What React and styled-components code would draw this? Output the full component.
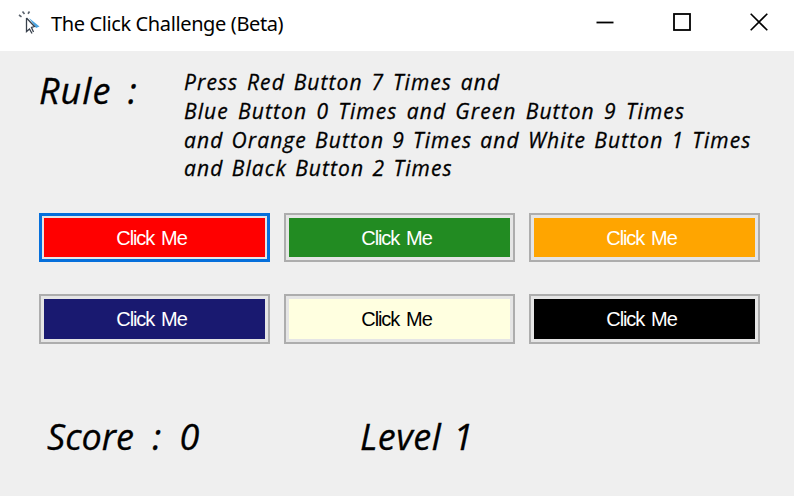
import { useState } from "react";
import styled, { createGlobalStyle } from "styled-components";

const GlobalStyle = createGlobalStyle`
  * {
    box-sizing: border-box;
  }

  body {
    margin: 0;
    background: #efefef;
  }
`;

const Window = styled.div`
  width: 794px;
  height: 496px;
  overflow: hidden;
  display: flex;
  flex-direction: column;
  background: #efefef;
  color: #000;
`;

const TitleBar = styled.header`
  flex: none;
  height: 51px;
  padding: 0 0 4px 17px;
  display: flex;
  align-items: center;
  background: #fff;
`;

const Title = styled.h1`
  flex: 1;
  margin: 0 0 0 10px;
  font: 400 20px/28px "Noto Sans", "Open Sans", sans-serif;
  letter-spacing: -0.38px;
  white-space: nowrap;
`;

const Controls = styled.div`
  display: flex;
  height: 100%;
  margin-right: -3px;
  padding-bottom: 3px;
`;

const ControlButton = styled.button`
  width: 77px;
  padding: 0;
  border: 0;
  background: transparent;
  display: flex;
  align-items: center;
  justify-content: center;
`;

const Content = styled.main`
  flex: 1;
  display: flex;
  flex-direction: column;
  padding: 17px 34px 0 39px;
`;

const Rule = styled.section`
  display: flex;
  height: 145px;
`;

const Script = styled.span`
  font-family: "Open Sans", "Noto Sans", sans-serif;
  font-style: italic;
  white-space: pre;
  font-size: ${({ $size }) => $size}px;
  line-height: ${({ $line }) => $line}px;
  letter-spacing: ${({ $tracking }) => $tracking || 0}px;
  word-spacing: ${({ $gap }) => $gap || 0}px;
  -webkit-text-stroke: 0.3px #000;
`;

const RuleLabel = styled.div`
  width: 145px;
`;

const RuleLines = styled.div`
  display: flex;
  flex-direction: column;
`;

const ButtonGrid = styled.div`
  display: grid;
  grid-template-columns: repeat(3, 231px);
  grid-template-rows: 49px 50px;
  column-gap: 14px;
  row-gap: 32px;
`;

const ClickButton = styled.button`
  padding: 0 6px 0 0;
  border: ${({ $focused }) => ($focused ? "3px solid #056fdb" : "2px solid #adadad")};
  background: ${({ $fill }) => $fill};
  box-shadow: inset 0 0 0 ${({ $focused }) => ($focused ? 2 : 3)}px #e5e5e5;
  color: ${({ $color }) => $color || "#fff"};
  font: 400 20px/24px "Liberation Sans", Arial, sans-serif;
  letter-spacing: -1.1px;
  word-spacing: 2.5px;
  outline: none;
`;

const Status = styled.footer`
  display: flex;
  margin-top: 68px;
  padding-left: 8px;
`;

const ScoreCell = styled.div`
  width: 313px;
`;

const ruleLines = [
  { text: "Press Red Button 7 Times and", tracking: 1.1, gap: 2.2 },
  { text: "Blue Button 0 Times and Green Button 9 Times", tracking: 1.1, gap: 2.7 },
  { text: "and Orange Button 9 Times and White Button 1 Times", tracking: 1.1, gap: 1.6 },
  { text: "and Black Button 2 Times", tracking: 1.1, gap: 1.8 },
];

const buttons = [
  { id: "red", fill: "#ff0000" },
  { id: "green", fill: "#228b22" },
  { id: "orange", fill: "#ffa500" },
  { id: "blue", fill: "#191970" },
  { id: "white", fill: "#ffffe0", color: "#000" },
  { id: "black", fill: "#000000" },
];

const CursorIcon = () => (
  <svg width="24" height="30" viewBox="0 0 24 30">
    <path d="M12 9L22.5 17.5L19 19Z" fill="#4aa3df" />
    <path d="M9.5 9V22.5L12.5 20L15 24.5M9.5 9L17.5 17.5L14.5 18.5L16.5 23" fill="#fff" stroke="#38404c" strokeWidth="1.3" />
    <path d="M2 6L4.5 7.8M5.5 2.5L7.5 5M12.5 2.5L11 4.8" stroke="#59616b" strokeWidth="1.6" fill="none" />
  </svg>
);

const App = () => {
  const [focused, setFocused] = useState("red");
  const [score] = useState(0);

  return (
    <>
      <GlobalStyle />
      <Window>
        <TitleBar>
          <CursorIcon />
          <Title>The Click Challenge (Beta)</Title>
          <Controls>
            <ControlButton aria-label="Minimize">
              <svg width="18" height="18" viewBox="0 0 18 18">
                <path d="M0.5 9.5H17.5" stroke="#000" strokeWidth="1.8" />
              </svg>
            </ControlButton>
            <ControlButton aria-label="Maximize">
              <svg width="18" height="18" viewBox="0 0 18 18">
                <rect x="1" y="1" width="16" height="16" fill="none" stroke="#000" strokeWidth="1.8" />
              </svg>
            </ControlButton>
            <ControlButton aria-label="Close">
              <svg width="18" height="18" viewBox="0 0 18 18">
                <path d="M0.7 0.7L17.3 17.3M17.3 0.7L0.7 17.3" stroke="#000" strokeWidth="1.6" />
              </svg>
            </ControlButton>
          </Controls>
        </TitleBar>
        <Content>
          <Rule>
            <RuleLabel>
              <Script $size={36} $line={46} $tracking={1} $gap={6}>Rule :</Script>
            </RuleLabel>
            <RuleLines>
              {ruleLines.map((line) => (
                <Script key={line.text} $size={21} $line={28.8} $tracking={line.tracking} $gap={line.gap}>
                  {line.text}
                </Script>
              ))}
            </RuleLines>
          </Rule>
          <ButtonGrid>
            {buttons.map((button) => (
              <ClickButton
                key={button.id}
                $fill={button.fill}
                $color={button.color}
                $focused={focused === button.id}
                onClick={() => setFocused(button.id)}
              >
                Click Me
              </ClickButton>
            ))}
          </ButtonGrid>
          <Status>
            <ScoreCell>
              <Script $size={36} $line={50} $gap={9}>Score : {score}</Script>
            </ScoreCell>
            <Script $size={36} $line={50} $tracking={0.5} $gap={2}>Level 1</Script>
          </Status>
        </Content>
      </Window>
    </>
  );
};

export default App;
